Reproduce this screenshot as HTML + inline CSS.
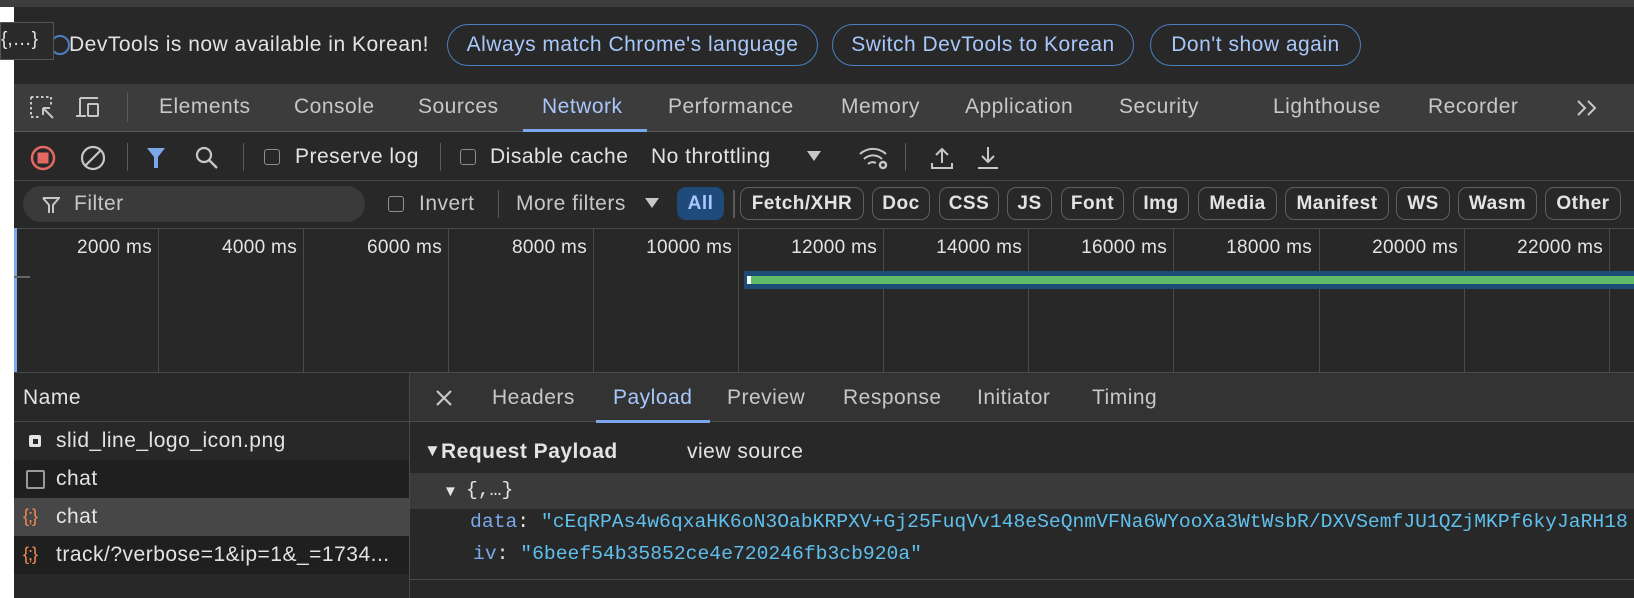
<!DOCTYPE html>
<html><head><meta charset="utf-8"><style>
*{margin:0;padding:0;box-sizing:border-box}
body{width:1634px;height:598px;background:#282828;position:relative;overflow:hidden;font-family:"Liberation Sans",Arial,sans-serif;color:#e3e3e3;font-size:21px;letter-spacing:0.5px}
.a{position:absolute;white-space:nowrap}
.t{color:#c7c7c7}
.btn{position:absolute;top:24px;height:42px;border:1.5px solid #4a7fc0;border-radius:21px;color:#a8c7fa;display:flex;align-items:center;justify-content:center;font-size:21px}
.pill{position:absolute;top:187px;height:33px;border:1px solid #5f5f5f;border-radius:9px;display:flex;align-items:center;justify-content:center;font-weight:bold;font-size:19px;color:#e3e3e3}
.vl{position:absolute;top:228px;height:145px;width:1px;background:#4a4a4a}
.lb{position:absolute;top:237px;font-size:19px;color:#e3e3e3;text-align:right;width:120px;letter-spacing:0.3px}
.cb{position:absolute;width:16px;height:16px;border:1.5px solid #8e8e8e;border-radius:3px}
.mono{font-family:"Liberation Mono","DejaVu Sans Mono",monospace;font-size:19.7px;letter-spacing:0}
</style></head><body>
<div class="a" style="left:0;top:0;width:1634px;height:7px;background:#3d3d3d"></div>
<div class="a" style="left:0;top:7px;width:14px;height:591px;background:#fff"></div>
<!-- infobar -->
<div class="a" style="left:50px;top:35px;width:20px;height:20px;border-radius:50%;border:2px solid #4a7fc0"></div>
<div class="a" style="left:0;top:22px;width:54px;height:38px;background:#2a2a2a;border:1px solid #555;font-size:19px;line-height:34px;letter-spacing:0">{,…}</div>
<div class="a" style="left:69px;top:33px;color:#e3e3e3;letter-spacing:0.5px">DevTools is now available in Korean!</div>
<div class="btn" style="left:447px;width:371px">Always match Chrome's language</div>
<div class="btn" style="left:832px;width:302px">Switch DevTools to Korean</div>
<div class="btn" style="left:1150px;width:211px">Don't show again</div>
<!-- tab bar -->
<div class="a" style="left:14px;top:84px;width:1620px;height:48px;background:#3c3c3c;border-bottom:1px solid #5a5a5a"></div>
<svg class="a" style="left:28px;top:94px" width="84" height="28" viewBox="0 0 84 28" fill="none" stroke="#c7c7c7" stroke-width="2">
<path d="M3 3h20v8M3 3v20h8" stroke-dasharray="2.5 2.5"/><path d="M15 14l10 10M15 14v7M15 14h7"/>
<path d="M52 4h18M52 4v18M48 22h10"/><rect x="60" y="10" width="10" height="12" rx="1"/></svg>
<div class="a" style="left:127px;top:92px;width:1px;height:30px;background:#5a5a5a"></div>
<div class="a t" style="left:159px;top:95px">Elements</div>
<div class="a t" style="left:294px;top:95px">Console</div>
<div class="a t" style="left:418px;top:95px">Sources</div>
<div class="a" style="left:542px;top:95px;color:#a8c7fa">Network</div>
<div class="a" style="left:523px;top:129px;width:124px;height:3px;background:#7ca7ea"></div>
<div class="a t" style="left:668px;top:95px">Performance</div>
<div class="a t" style="left:841px;top:95px">Memory</div>
<div class="a t" style="left:965px;top:95px">Application</div>
<div class="a t" style="left:1119px;top:95px">Security</div>
<div class="a t" style="left:1273px;top:95px">Lighthouse</div>
<div class="a t" style="left:1428px;top:95px">Recorder</div>
<svg class="a" style="left:1576px;top:99px" width="24" height="18" viewBox="0 0 24 18" fill="none" stroke="#c7c7c7" stroke-width="2"><path d="M2 2l7 7-7 7M12 2l7 7-7 7"/></svg>
<!-- toolbar -->
<svg class="a" style="left:28px;top:143px" width="200" height="30" viewBox="0 0 200 30" fill="none">
<circle cx="15" cy="15" r="11" stroke="#e46962" stroke-width="2.5"/><rect x="9.5" y="9.5" width="11" height="11" fill="#e46962"/>
<circle cx="65" cy="15" r="11" stroke="#c7c7c7" stroke-width="2.2"/><path d="M57 23L73 7" stroke="#c7c7c7" stroke-width="2.2"/>
<path d="M119 5h18l-7 9v11h-4V14z" fill="#7ca7ea"/>
<circle cx="176" cy="12" r="7" stroke="#c7c7c7" stroke-width="2.2"/><path d="M181 17l8 8" stroke="#c7c7c7" stroke-width="2.4"/></svg>
<div class="a" style="left:127px;top:143px;width:1px;height:28px;background:#5a5a5a"></div>
<div class="a" style="left:243px;top:143px;width:1px;height:28px;background:#5a5a5a"></div>
<div class="cb" style="left:264px;top:149px"></div>
<div class="a" style="left:295px;top:145px">Preserve log</div>
<div class="a" style="left:440px;top:143px;width:1px;height:28px;background:#5a5a5a"></div>
<div class="cb" style="left:460px;top:149px"></div>
<div class="a" style="left:490px;top:145px">Disable cache</div>
<div class="a" style="left:651px;top:145px">No throttling</div>
<div class="a" style="left:807px;top:151px;width:0;height:0;border-left:7px solid transparent;border-right:7px solid transparent;border-top:10px solid #c7c7c7"></div>
<svg class="a" style="left:858px;top:143px" width="140" height="30" viewBox="0 0 140 30" fill="none" stroke="#c7c7c7" stroke-width="2">
<path d="M2 11a19 19 0 0 1 26 0M6 16a13 13 0 0 1 18 0M10 21a7 7 0 0 1 8-1"/><circle cx="25" cy="22" r="3" stroke-width="2.5"/>
<path d="M84 20V6M78 12l6-6 6 6M74 20v5h20v-5"/><path d="M130 4v15M124 13l6 6 6-6M120 25h20"/></svg>
<div class="a" style="left:905px;top:143px;width:1px;height:28px;background:#5a5a5a"></div>
<!-- filter row -->
<div class="a" style="left:14px;top:180px;width:1620px;height:1px;background:#4a4a4a"></div>
<div class="a" style="left:23px;top:186px;width:342px;height:36px;border-radius:18px;background:#3a3a3a"></div>
<svg class="a" style="left:42px;top:196px" width="18" height="18" viewBox="0 0 18 18" fill="none" stroke="#c7c7c7" stroke-width="2"><path d="M1 2h16l-6 7v8M1 2l6 7v8"/></svg>
<div class="a t" style="left:74px;top:192px">Filter</div>
<div class="cb" style="left:388px;top:196px"></div>
<div class="a t" style="left:419px;top:192px">Invert</div>
<div class="a" style="left:498px;top:190px;width:1px;height:28px;background:#5a5a5a"></div>
<div class="a t" style="left:516px;top:192px">More filters</div>
<div class="a" style="left:645px;top:198px;width:0;height:0;border-left:7px solid transparent;border-right:7px solid transparent;border-top:10px solid #c7c7c7"></div>
<div class="pill" style="left:677px;width:47px;background:#1f4b7a;border-color:#1f4b7a;color:#a8c7fa">All</div>
<div class="a" style="left:733px;top:190px;width:2px;height:28px;background:#5a5a5a"></div>
<div class="pill" style="left:740px;width:124px">Fetch/XHR</div>
<div class="pill" style="left:872px;width:58px">Doc</div>
<div class="pill" style="left:939px;width:60px">CSS</div>
<div class="pill" style="left:1007px;width:45px">JS</div>
<div class="pill" style="left:1061px;width:63px">Font</div>
<div class="pill" style="left:1133px;width:56px">Img</div>
<div class="pill" style="left:1198px;width:79px">Media</div>
<div class="pill" style="left:1285px;width:104px">Manifest</div>
<div class="pill" style="left:1396px;width:54px">WS</div>
<div class="pill" style="left:1458px;width:79px">Wasm</div>
<div class="pill" style="left:1545px;width:76px">Other</div>
<!-- timeline -->
<div class="a" style="left:14px;top:228px;width:1620px;height:1px;background:#4a4a4a"></div>
<div class="a" style="left:14px;top:228px;width:3px;height:145px;background:#7ca7ea"></div>
<div class="a" style="left:14px;top:276px;width:16px;height:2px;background:#666"></div>
<div class="vl" style="left:158px"></div><div class="vl" style="left:303px"></div><div class="vl" style="left:448px"></div><div class="vl" style="left:593px"></div><div class="vl" style="left:738px"></div><div class="vl" style="left:883px"></div><div class="vl" style="left:1028px"></div><div class="vl" style="left:1173px"></div><div class="vl" style="left:1319px"></div><div class="vl" style="left:1464px"></div><div class="vl" style="left:1609px"></div>
<div class="lb" style="left:32px">2000 ms</div><div class="lb" style="left:177px">4000 ms</div><div class="lb" style="left:322px">6000 ms</div><div class="lb" style="left:467px">8000 ms</div><div class="lb" style="left:612px">10000 ms</div><div class="lb" style="left:757px">12000 ms</div><div class="lb" style="left:902px">14000 ms</div><div class="lb" style="left:1047px">16000 ms</div><div class="lb" style="left:1192px">18000 ms</div><div class="lb" style="left:1338px">20000 ms</div><div class="lb" style="left:1483px">22000 ms</div>
<div class="a" style="left:744px;top:271px;width:890px;height:18px;background:#1e4a78"></div>
<div class="a" style="left:750px;top:276px;width:884px;height:8px;background:#5fba6a"></div>
<div class="a" style="left:747px;top:276px;width:4px;height:8px;background:#fff"></div>
<!-- bottom split -->
<div class="a" style="left:14px;top:372px;width:1620px;height:1px;background:#4a4a4a"></div>
<div class="a" style="left:409px;top:373px;width:1px;height:225px;background:#4a4a4a"></div>
<div class="a" style="left:14px;top:373px;width:395px;height:49px;background:#282828;border-bottom:1px solid #4a4a4a"></div>
<div class="a" style="left:23px;top:386px;color:#e3e3e3">Name</div>
<div class="a" style="left:14px;top:422px;width:395px;height:38px;background:#282828"></div>
<div class="a" style="left:14px;top:460px;width:395px;height:38px;background:#1f1f1f"></div>
<div class="a" style="left:14px;top:498px;width:395px;height:38px;background:#474747"></div>
<div class="a" style="left:14px;top:536px;width:395px;height:38px;background:#1f1f1f"></div>
<div class="a" style="left:29px;top:435px;width:12px;height:12px;background:#e3e3e3;border-radius:2px"></div>
<div class="a" style="left:33px;top:439px;width:5px;height:5px;background:#282828"></div>
<div class="a" style="left:56px;top:429px">slid_line_logo_icon.png</div>
<div class="a" style="left:26px;top:470px;width:19px;height:19px;border:2px solid #9a9a9a;border-radius:2px"></div>
<div class="a" style="left:56px;top:467px">chat</div>
<div class="a" style="left:23px;top:506px;color:#f28b54;font-size:18px;letter-spacing:-1px">{;}</div>
<div class="a" style="left:56px;top:505px">chat</div>
<div class="a" style="left:23px;top:544px;color:#f28b54;font-size:18px;letter-spacing:-1px">{;}</div>
<div class="a" style="left:56px;top:543px">track/?verbose=1&amp;ip=1&amp;_=1734...</div>
<!-- detail -->
<div class="a" style="left:410px;top:373px;width:1224px;height:49px;background:#333;border-bottom:1px solid #4a4a4a"></div>
<svg class="a" style="left:435px;top:389px" width="18" height="18" viewBox="0 0 18 18" stroke="#c7c7c7" stroke-width="2.2"><path d="M2 2l14 14M16 2L2 16"/></svg>
<div class="a t" style="left:492px;top:386px">Headers</div>
<div class="a" style="left:613px;top:386px;color:#a8c7fa">Payload</div>
<div class="a" style="left:596px;top:420px;width:114px;height:3px;background:#7ca7ea"></div>
<div class="a t" style="left:727px;top:386px">Preview</div>
<div class="a t" style="left:843px;top:386px">Response</div>
<div class="a t" style="left:977px;top:386px">Initiator</div>
<div class="a t" style="left:1092px;top:386px">Timing</div>
<div class="a" style="left:424px;top:441px;font-size:17px">▼</div>
<div class="a" style="left:441px;top:440px;font-weight:bold">Request Payload</div>
<div class="a" style="left:687px;top:440px">view source</div>
<div class="a" style="left:410px;top:473px;width:1224px;height:36px;background:#3a3a3a"></div>
<div class="a" style="left:443px;top:483px;font-size:15px">▼</div>
<div class="a mono" style="left:466px;top:479px">{,…}</div>
<div class="a mono" style="left:470px;top:511px"><span style="color:#7ca7ea">data</span>: <span style="color:#5fc0ee">"cEqRPAs4w6qxaHK6oN3OabKRPXV+Gj25FuqVv148eSeQnmVFNa6WYooXa3WtWsbR/DXVSemfJU1QZjMKPf6kyJaRH18</span></div>
<div class="a mono" style="left:473px;top:543px"><span style="color:#7ca7ea">iv</span>: <span style="color:#5fc0ee">"6beef54b35852ce4e720246fb3cb920a"</span></div>
<div class="a" style="left:410px;top:579px;width:1224px;height:1px;background:#4a4a4a"></div>
</body></html>
